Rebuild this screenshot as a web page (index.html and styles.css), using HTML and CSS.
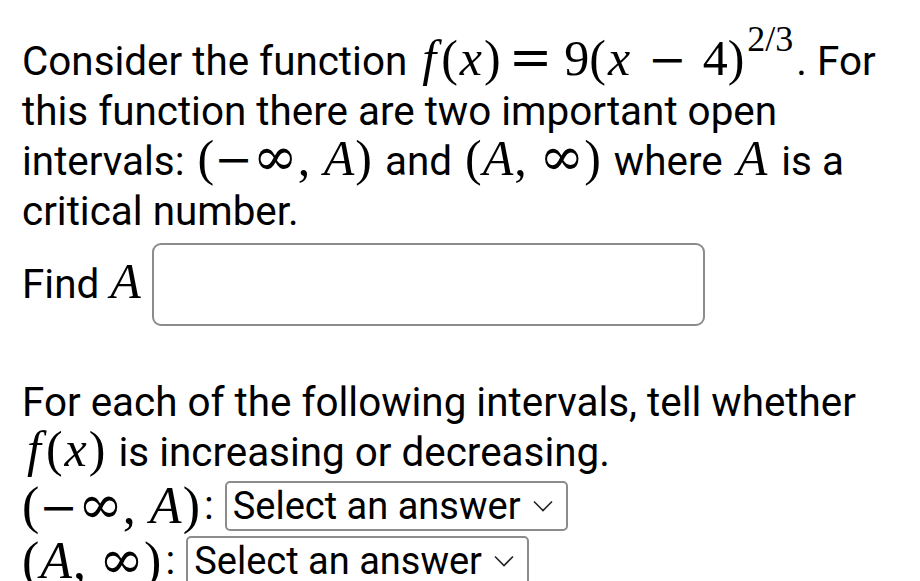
FILE: index.html
```html
<!DOCTYPE html>
<html>
<head>
<meta charset="utf-8">
<link rel="stylesheet" href="styles.css">
</head>
<body>
<div class="question">
  <p class="para">Consider the function <span class="m"><i class="mf">f</i>(<i class="mx">x</i>)<span class="rel">=</span>9(<i class="mx">x</i><span class="bin">−</span>4)<sup class="sup">2/3</sup></span>. For<br>this function there are two important open<br>intervals: <span class="m">(<span class="op">−</span><span class="inf">∞</span>, <i class="ma">A</i>)</span> and <span class="m">(<i class="ma">A</i>, <span class="inf">∞</span>)</span> where <span class="m"><i class="ma">A</i></span> is a<br>critical number.</p>

  <div class="find-row">
    <span class="find-label">Find <span class="m"><i class="ma">A</i></span></span>
    <span class="answer-box"></span>
  </div>

  <p class="para para-2">For each of the following intervals, tell whether<br><span class="m"><i class="mf">f</i>(<i class="mx">x</i>)</span> is increasing or decreasing.</p>

  <div class="sel-row">
    <span class="m m-big">(<span class="op">−</span><span class="inf">∞</span>, <i class="ma">A</i>)</span><span class="colon">:</span>
    <span class="select">Select an answer<svg class="chev" width="20" height="12" viewBox="0 0 20 12"><path d="M1 1.5 L10 10.5 L19 1.5" fill="none" stroke="#222" stroke-width="1.6"/></svg></span>
  </div>
  <div class="sel-row">
    <span class="m m-big">(<i class="ma">A</i>, <span class="inf">∞</span>)</span><span class="colon">:</span>
    <span class="select">Select an answer<svg class="chev" width="20" height="12" viewBox="0 0 20 12"><path d="M1 1.5 L10 10.5 L19 1.5" fill="none" stroke="#222" stroke-width="1.6"/></svg></span>
  </div>
</div>
</body>
</html>
```

FILE: styles.css
```css
html, body {
  margin: 0;
  padding: 0;
  background: #ffffff;
}

body {
  font-family: Roboto, "Liberation Sans", sans-serif;
  color: #000;
  font-size: 40.4px;
  line-height: 50px;
}

.question {
  padding: 37px 0 0 22px;
}

.para {
  margin: 0;
  white-space: nowrap;
}

.m {
  font-family: "Liberation Serif", "DejaVu Serif", serif;
  font-size: 50px;
  line-height: 0;
  margin: 0 3px;
}

.m i {
  font-style: italic;
}

.mf {
  padding: 0 5px 0 2px;
}

.mx {
  padding: 0 2px 0 2px;
}

.ma {
  padding: 0 1px 0 1px;
}

.op {
  font-family: "DejaVu Serif", serif;
  font-size: 46px;
}

.inf {
  font-family: "DejaVu Serif", serif;
  font-size: 54px;
}

.rel {
  font-family: "DejaVu Serif", serif;
  font-size: 52px;
  margin: 0 12px 0 8px;
}

.bin {
  font-family: "DejaVu Serif", serif;
  font-size: 46px;
  margin: 0 16px;
}

.sup {
  font-size: 36px;
  vertical-align: 0;
  position: relative;
  top: -24px;
  line-height: 0;
  margin-left: 3px;
}

.find-row {
  display: flex;
  align-items: center;
  gap: 10px;
  margin-top: 6px;
}

.find-label {
  display: inline-block;
  white-space: nowrap;
}

.find-label .m {
  margin: 0;
}

.answer-box {
  display: block;
  width: 549px;
  height: 79px;
  border: 2px solid #8c8c8c;
  border-radius: 9px;
}

.para-2 {
  margin-top: 52px;
}

.para-2 .m:first-child {
  margin-left: 0;
}

.sel-row {
  display: flex;
  align-items: center;
  white-space: nowrap;
  height: 55px;
}

.sel-row .m {
  margin: 0;
}

.m-big {
  font-size: 52px;
}

.colon {
  margin: 0 11px 0 4px;
}

.select {
  display: inline-flex;
  align-items: center;
  gap: 12px;
  font-size: 38px;
  line-height: 46px;
  padding: 0 13px 0 6px;
  border: 2px solid #8c8c8c;
  border-radius: 5px;
}

.chev {
  display: block;
}
```
